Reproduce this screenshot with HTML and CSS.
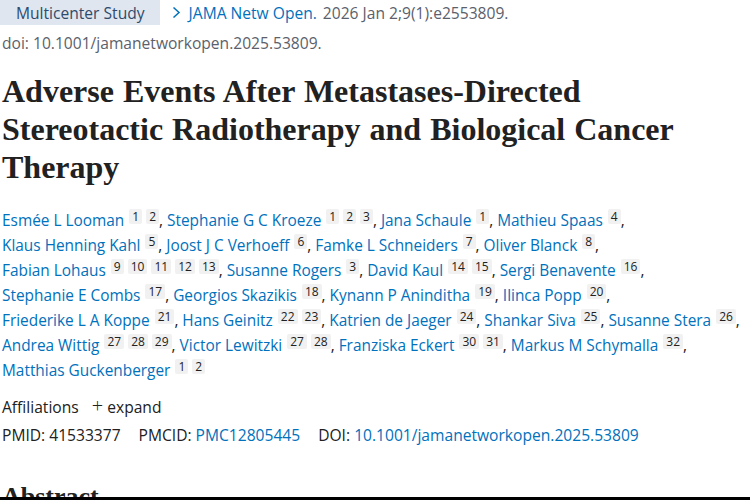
FILE: index.html
```html
<!DOCTYPE html>
<html>
<head>
<meta charset="utf-8">
<link rel="stylesheet" href="styles.css">
</head>
<body>
<main class="page">
  <div class="cite-row">
    <span class="pub-type">Multicenter Study</span>
    <span class="journal"><svg class="chev" width="9" height="13" viewBox="0 0 9 13"><path d="M1.5 1.5 L7 6.5 L1.5 11.5" fill="none" stroke="#0071bc" stroke-width="1.5"/></svg>JAMA Netw Open.</span>
    <span class="cit">2026 Jan 2;9(1):e2553809.</span>
  </div>
  <div class="doi-line">doi: 10.1001/jamanetworkopen.2025.53809.</div>

  <h1 class="title">Adverse Events After Metastases-Directed Stereotactic Radiotherapy and Biological Cancer Therapy</h1>

  <div class="authors">
    <a class="au">Esmée L Looman</a><span class="refs"><sup>1</sup><sup>2</sup></span>, <a class="au">Stephanie G C Kroeze</a><span class="refs"><sup>1</sup><sup>2</sup><sup>3</sup></span>, <a class="au">Jana Schaule</a><span class="refs"><sup>1</sup></span>, <a class="au">Mathieu Spaas</a><span class="refs"><sup>4</sup></span>,<br>
    <a class="au">Klaus Henning Kahl</a><span class="refs"><sup>5</sup></span>, <a class="au">Joost J C Verhoeff</a><span class="refs"><sup>6</sup></span>, <a class="au">Famke L Schneiders</a><span class="refs"><sup>7</sup></span>, <a class="au">Oliver Blanck</a><span class="refs"><sup>8</sup></span>,<br>
    <a class="au">Fabian Lohaus</a><span class="refs"><sup>9</sup><sup>10</sup><sup>11</sup><sup>12</sup><sup>13</sup></span>, <a class="au">Susanne Rogers</a><span class="refs"><sup>3</sup></span>, <a class="au">David Kaul</a><span class="refs"><sup>14</sup><sup>15</sup></span>, <a class="au">Sergi Benavente</a><span class="refs"><sup>16</sup></span>,<br>
    <a class="au">Stephanie E Combs</a><span class="refs"><sup>17</sup></span>, <a class="au">Georgios Skazikis</a><span class="refs"><sup>18</sup></span>, <a class="au">Kynann P Aninditha</a><span class="refs"><sup>19</sup></span>, <a class="au">Ilinca Popp</a><span class="refs"><sup>20</sup></span>,<br>
    <a class="au">Friederike L A Koppe</a><span class="refs"><sup>21</sup></span>, <a class="au">Hans Geinitz</a><span class="refs"><sup>22</sup><sup>23</sup></span>, <a class="au">Katrien de Jaeger</a><span class="refs"><sup>24</sup></span>, <a class="au">Shankar Siva</a><span class="refs"><sup>25</sup></span>, <a class="au">Susanne Stera</a><span class="refs"><sup>26</sup></span>,<br>
    <a class="au">Andrea Wittig</a><span class="refs"><sup>27</sup><sup>28</sup><sup>29</sup></span>, <a class="au">Victor Lewitzki</a><span class="refs"><sup>27</sup><sup>28</sup></span>, <a class="au">Franziska Eckert</a><span class="refs"><sup>30</sup><sup>31</sup></span>, <a class="au">Markus M Schymalla</a><span class="refs"><sup>32</sup></span>,<br>
    <a class="au">Matthias Guckenberger</a><span class="refs"><sup>1</sup><sup>2</sup></span>
  </div>

  <div class="affil">Affiliations <span class="expand"><span class="plus">+</span> expand</span></div>

  <div class="ids">
    <span class="id">PMID: 41533377</span>
    <span class="id">PMCID: <a class="link">PMC12805445</a></span>
    <span class="id">DOI: <a class="link">10.1001/jamanetworkopen.2025.53809</a></span>
  </div>

  <h2 class="abstract">Abstract</h2>
</main>
<div class="bottom-rule"></div>
</body>
</html>
```
FILE: styles.css
```css
html, body {
  margin: 0;
  padding: 0;
  background: #fff;
  overflow: hidden;
  height: 500px;
}
body {
  font-family: "Open Sans", "Noto Sans", sans-serif;
  color: #212121;
  font-size: 15.6px;
  position: relative;
}
.page {
  padding-left: 2px;
}
.cite-row {
  display: flex;
  align-items: center;
  height: 25px;
  margin-left: -2px;
}
.pub-type {
  background: #dfe6ef;
  color: #2f4a6b;
  height: 25px;
  display: flex;
  align-items: center;
  padding: 0 15px 0 16px;
}
.journal {
  color: #0071bc;
  margin-left: 12px;
  display: flex;
  align-items: center;
}
.chev {
  margin-right: 8px;
}
.cit {
  color: #5b616b;
  margin-left: 6px;
}
.doi-line {
  color: #5b616b;
  margin-top: 6px;
  line-height: 24px;
}
.title {
  font-family: "Liberation Serif", serif;
  font-weight: bold;
  font-size: 32px;
  line-height: 38px;
  margin: 17px 0 0 0;
  color: #212121;
  width: 700px;
  word-spacing: 1px;
}
.authors {
  margin-top: 22px;
  line-height: 25px;
  color: #212121;
  white-space: nowrap;
  font-size: 15.4px;
}
.au {
  color: #0071bc;
}
.refs {
  display: inline-flex;
  gap: 4px;
  margin-left: 5px;
  vertical-align: 5px;
}
.refs sup {
  font-size: 12px;
  line-height: 15px;
  background: #f1f1f1;
  padding: 0 3px;
  border-radius: 2px;
  vertical-align: baseline;
}
.affil {
  margin-top: 12px;
  line-height: 24px;
}
.expand {
  margin-left: 9px;
}
.plus {
  font-size: 20px;
  font-weight: 300;
  line-height: 20px;
}
.ids {
  display: flex;
  gap: 18px;
  line-height: 24px;
  margin-top: 4px;
}
.link {
  color: #0071bc;
}
.abstract {
  font-family: "Liberation Serif", serif;
  font-size: 26px;
  font-weight: bold;
  margin: 35px 0 0 0;
  line-height: 30px;
}
.bottom-rule {
  position: absolute;
  left: 0;
  right: 0;
  top: 497px;
  height: 3px;
  background: #000;
}
```
